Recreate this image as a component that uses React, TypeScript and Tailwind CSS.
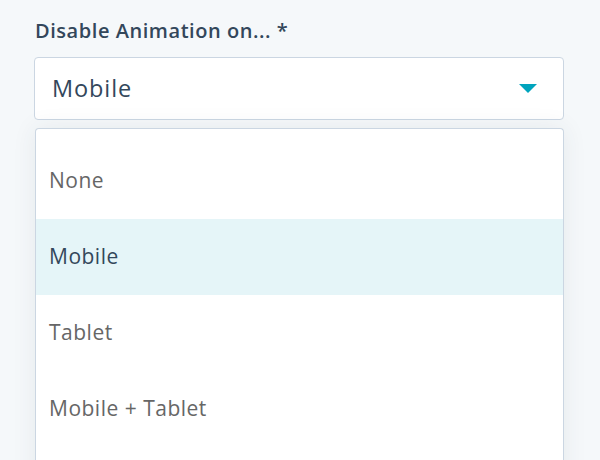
import React from 'react';

const options = ["None", "Mobile", "Tablet", "Mobile + Tablet"];

const App: React.FC = () => {
    const selected = "Mobile";

    return (
        <div className="w-[600px] h-[460px] overflow-hidden bg-[#f5f8fa] font-['Open_Sans','Lato',sans-serif]">
            <div className="pt-[18px] pl-[34px] pr-[36px]">
                <label className="block pl-px text-[20px] leading-[26px] tracking-[0.55px] font-semibold text-[#33475b]">Disable Animation on... *</label>
                <div className="mt-[13px] h-[63px] flex items-center justify-between rounded-[4px] border border-[#cbd6e2] bg-white pl-[17px] pr-[26px]">
                    <span className="text-[23.5px] tracking-[0.9px] text-[#33475b]">{selected}</span>
                    <svg width="18" height="10" viewBox="0 0 18 10">
                        <polygon points="0,0 18,0 9,9" fill="#00a4bd" />
                    </svg>
                </div>
                <div className="mt-[8px] ml-px rounded-t-[4px] border border-b-0 border-[#cbd6e2] bg-white pt-[14px] h-[400px] shadow-[0_0_24px_rgba(45,62,80,0.08)]">
                    {options.map(o => (
                        <div key={o} className={"h-[76px] flex items-center pl-[13px] text-[21px] tracking-[0.5px] " + (o === selected ? "bg-[#e5f5f8] text-[#33475b]" : "text-[#666666]")}>
                            {o}
                        </div>
                    ))}
                </div>
            </div>
        </div>
    )
}

export default App;
